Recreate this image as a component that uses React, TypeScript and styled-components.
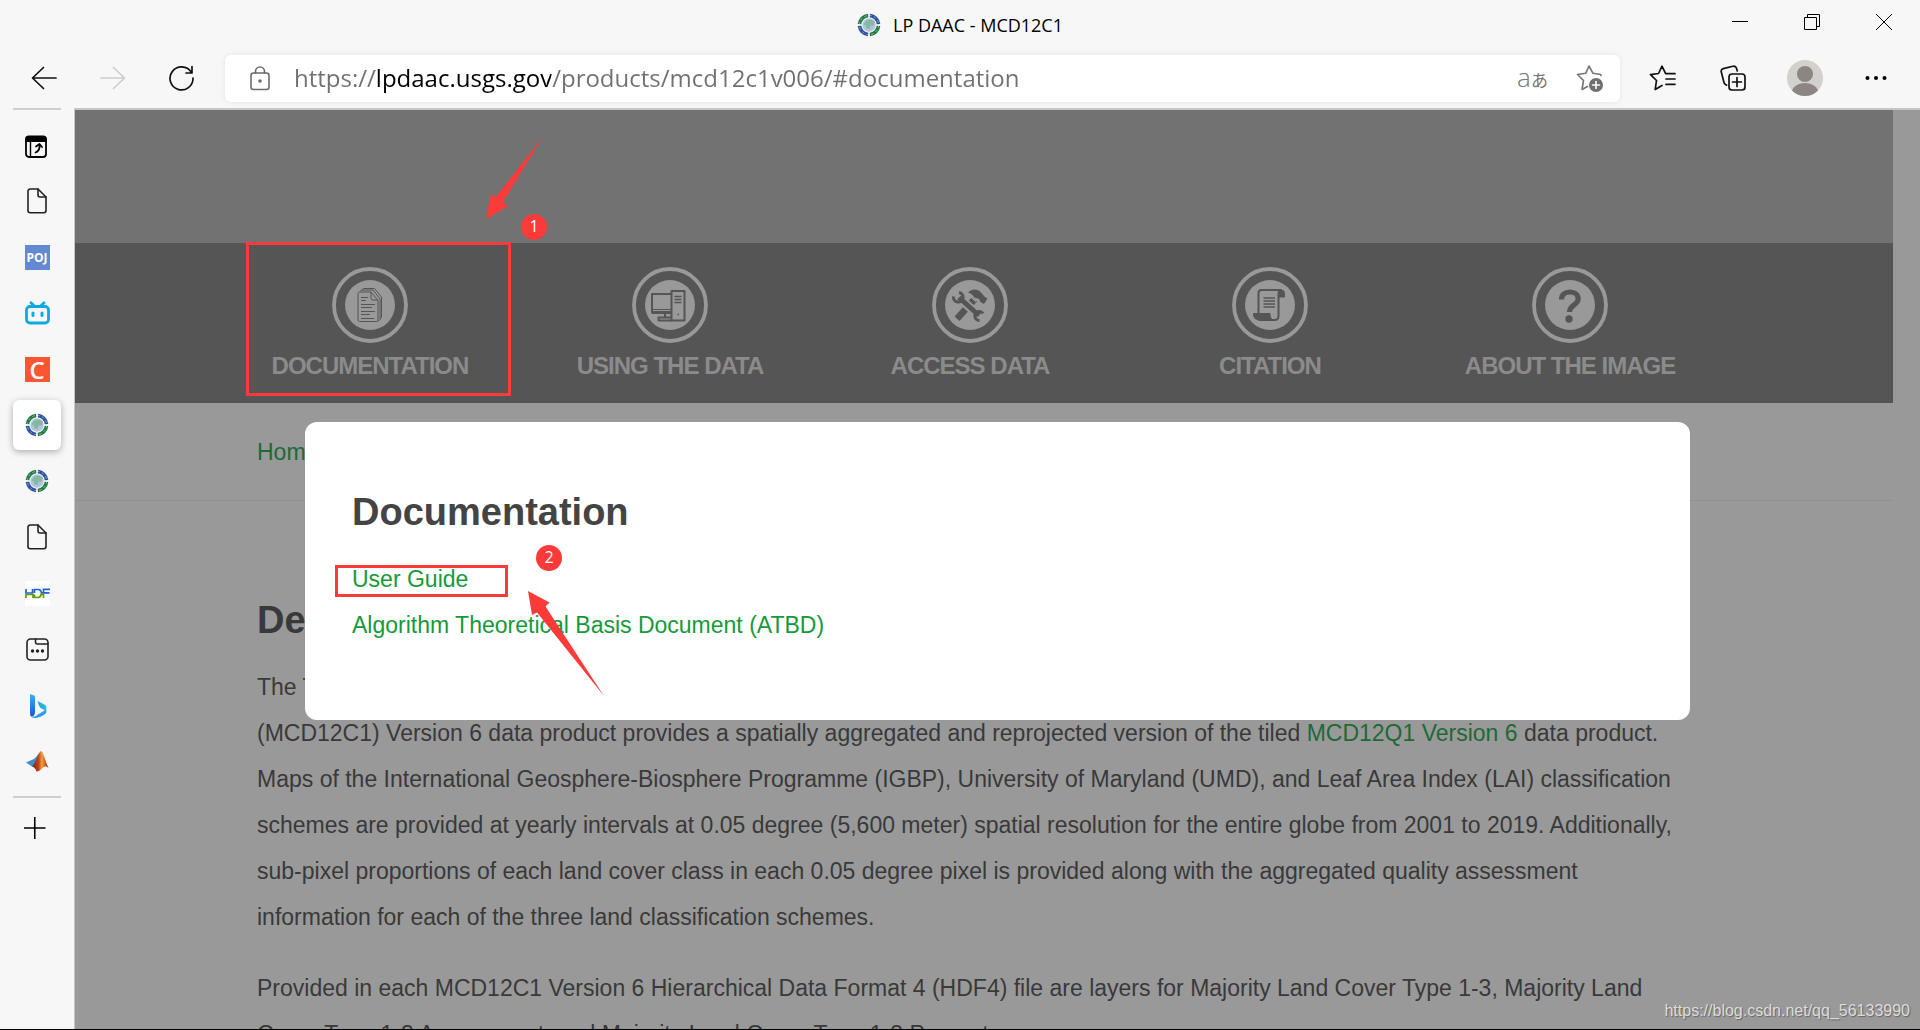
import React from "react";
import styled, { createGlobalStyle, css } from "styled-components";

const ui = `"Open Sans", "Noto Sans", sans-serif`;
const arial = `"Liberation Sans", Arial, sans-serif`;
const red = "#fd3a3a";

const GlobalStyle = createGlobalStyle`
  * { box-sizing: border-box; }
  html, body, #root { height: 100%; }
  body { margin: 0; overflow: hidden; background: #f7f7f7; }
  button { margin: 0; padding: 0; border: 0; background: none; font: inherit; color: inherit; cursor: pointer; }
  svg { display: block; flex: none; }
`;

/* ---------- browser frame ---------- */

const Window = styled.div`
  display: flex;
  flex-direction: column;
  height: 100vh;
  background: #f7f7f7;
  border-bottom: 1px solid #000;
  color: #111;
`;

const TitleBar = styled.header`
  display: grid;
  grid-template-columns: 1fr auto 1fr;
  height: 49px;
  flex: none;
`;

const TitleText = styled.div`
  grid-column: 2;
  display: flex;
  align-items: center;
  gap: 12px;
  font: 18px/24px ${ui};
  color: #000;
`;

const WindowButtons = styled.div`
  display: flex;
  justify-content: flex-end;
`;

const IconButton = styled.button<{ $w: number; $h?: number; $color?: string }>`
  display: flex;
  align-items: center;
  justify-content: center;
  flex: none;
  width: ${(p) => p.$w}px;
  height: ${(p) => p.$h ?? 47}px;
  color: ${(p) => p.$color ?? "#111"};
`;

const Toolbar = styled.nav`
  display: flex;
  align-items: center;
  height: 59px;
  flex: none;
  padding: 0 9px 1px;
`;

const AddressBar = styled.div`
  display: flex;
  align-items: center;
  flex: 1;
  min-width: 0;
  height: 47px;
  margin: 0 7px 0 9px;
  padding: 0 2px 0 25px;
  gap: 24px;
  border-radius: 6px;
  background: #fff;
  box-shadow: 0 0 6px rgba(0, 0, 0, 0.08);
`;

const AddressInput = styled.input`
  flex: 1;
  min-width: 0;
  height: 40px;
  padding: 0;
  border: 0;
  outline: 0;
  font: 24px/40px ${ui};
  color: transparent;
  background: linear-gradient(90deg, #707070 81px, #000 81px, #000 257px, #707070 257px);
  -webkit-background-clip: text;
  background-clip: text;
`;

const AddressActions = styled.div`
  display: flex;
`;

const TranslateLabel = styled.span`
  font: 300 26px/26px ${ui};
  small {
    font: 17px/26px "Noto Sans CJK JP", sans-serif;
  }
`;

const Body = styled.div`
  display: flex;
  flex: 1;
  min-height: 0;
`;

const TabRail = styled.aside`
  display: flex;
  flex-direction: column;
  align-items: center;
  flex: none;
  width: 74px;
`;

const RailLine = styled.hr`
  width: 48px;
  height: 2px;
  margin: 0;
  border: 0;
  flex: none;
  background: #cfcfcf;
`;

const TabList = styled.div`
  display: flex;
  flex-direction: column;
  gap: 6px;
  padding: 10px 0;
`;

const Tab = styled.button<{ $active?: boolean }>`
  display: flex;
  align-items: center;
  justify-content: center;
  width: 48px;
  height: 50px;
  border-radius: 6px;
  ${(p) =>
    p.$active &&
    css`
      background: #fff;
      box-shadow: 0 2px 7px rgba(0, 0, 0, 0.3);
    `}
`;

const Tile = styled.span<{ $bg: string; $size: number; $weight: number }>`
  display: flex;
  align-items: center;
  justify-content: center;
  width: 25px;
  height: 25px;
  overflow: hidden;
  background: ${(p) => p.$bg};
  color: #fff;
  font: ${(p) => p.$weight} ${(p) => p.$size}px/25px ${ui};
`;

/* ---------- web page ---------- */

const Viewport = styled.div`
  position: relative;
  display: flex;
  flex: 1;
  min-width: 0;
  border-top: 2px solid #c6c6c6;
  border-left: 1px solid #c6c6c6;
  background: #999;
  overflow: hidden;
  font: 23px/46px ${arial};
  color: #393939;
`;

const Page = styled.main`
  flex: 1;
  min-width: 0;
`;

const ScrollTrack = styled.div`
  flex: none;
  width: 27px;
  background: #999;
`;

const Banner = styled.div`
  height: 133px;
  background: #727272;
`;

const SectionNav = styled.nav`
  background: #555;
`;

const SectionList = styled.ul`
  display: grid;
  grid-template-columns: repeat(5, 1fr);
  max-width: 1528px;
  margin: 0 auto;
  padding: 24px 28px 14px 0;
  list-style: none;
`;

const SectionItem = styled.li`
  position: relative;
`;

const SectionLink = styled.a`
  display: flex;
  flex-direction: column;
  align-items: center;
  color: #8b8b8b;
  font-size: 24px;
  font-weight: 700;
  letter-spacing: -1px;
  text-decoration: none;
  text-transform: uppercase;
  white-space: nowrap;
`;

const Container = styled.div`
  max-width: 1454px;
  margin: 0 auto;
`;

const Breadcrumb = styled.div`
  padding: 26px 0 25px;
  border-bottom: 1px solid #919191;
`;

const Article = styled.article`
  padding: 96px 25px 0 0;
`;

const Heading = styled.h2`
  margin: 0 0 21px;
  font-size: 38px;
  line-height: 46px;
  font-weight: 700;
`;

const Paragraph = styled.p`
  margin: 0 0 25px;
`;

const PageLink = styled.a`
  color: #1d6a35;
  text-decoration: none;
`;

const Backdrop = styled.div`
  position: absolute;
  inset: 0;
  display: flex;
  justify-content: center;
  align-items: flex-start;
  padding-top: 312px;
`;

const Dialog = styled.section`
  width: 76%;
  max-width: 1385px;
  padding: 67px 47px 72px;
  border-radius: 12px;
  background: #fff;
  color: #444;
`;

const DocList = styled.ul`
  margin: 0;
  padding: 0;
  list-style: none;
`;

const DocItem = styled.li`
  position: relative;
`;

const DocLink = styled.a`
  color: #159a3a;
  text-decoration: none;
`;

/* ---------- annotations drawn over the page ---------- */

const Frame = styled.span<{ $x: number; $y: number; $w: number; $h: number }>`
  position: absolute;
  left: ${(p) => p.$x}px;
  top: ${(p) => p.$y}px;
  width: ${(p) => p.$w}px;
  height: ${(p) => p.$h}px;
  border: 3px solid ${red};
  pointer-events: none;
`;

const Badge = styled.span<{ $x: number; $y: number }>`
  position: absolute;
  left: ${(p) => p.$x}px;
  top: ${(p) => p.$y}px;
  width: 26px;
  height: 26px;
  border-radius: 50%;
  background: ${red};
  color: #fff;
  font: 16px/24px ${ui};
  text-align: center;
`;

const Arrow = styled.svg<{ $x: number; $y: number }>`
  position: absolute;
  left: ${(p) => p.$x}px;
  top: ${(p) => p.$y}px;
  fill: ${red};
  pointer-events: none;
`;

const Watermark = styled.span`
  position: absolute;
  right: 10px;
  bottom: 7px;
  font: 16px/22px ${arial};
  color: #dcdcdc;
  text-shadow: 1px 1px 1px rgba(0, 0, 0, 0.35);
`;

/* ---------- drawings ---------- */

const line = { fill: "none", stroke: "currentColor", strokeLinecap: "round", strokeLinejoin: "round" } as const;

const DaacLogo = () => (
  <svg width="24" height="24" viewBox="0 0 25 25" aria-hidden="true">
    <g fill="none" strokeWidth="3.800">
      <path d="M2.6 11.600A10 10 0 0 1 11.600 2.600" stroke="#1f7a45" />
      <path d="M13.400 2.600A10 10 0 0 1 22.400 11.600" stroke="#2c4f9e" />
      <path d="M22.400 13.400A10 10 0 0 1 13.400 22.400" stroke="#1f7a45" />
      <path d="M11.600 22.400A10 10 0 0 1 2.600 13.400" stroke="#2c4f9e" />
    </g>
    <circle cx="12.5" cy="12.5" r="10" fill="none" stroke="#fff" strokeWidth="1" strokeDasharray="3 2.2" opacity=".45" />
    <circle cx="12.5" cy="12.5" r="7" fill="#b4c2dd" />
    <path d="M8 10l3-3 5 0 3 3-2 3-3 0-1 4-3-1-1-3-2-1z" fill="#84b8a2" />
  </svg>
);

const PageIcon = () => (
  <svg width="20" height="26" viewBox="0 0 20 26" aria-hidden="true" {...line} stroke="#222" strokeWidth="1.6">
    <path d="M3.2 1H11l8 8v13.6a2.2 2.2 0 0 1-2.2 2.2H3.2A2.2 2.2 0 0 1 1 22.600V3.200A2.200 2.200 0 0 1 3.200 1z" />
    <path d="M11 1v6a2 2 0 0 0 2 2h6" />
  </svg>
);

const TabActionsIcon = () => (
  <svg width="25" height="28" viewBox="0 0 25 28" aria-hidden="true" {...line} stroke="#000" strokeWidth="1.800">
    <rect x="1" y="6" width="20" height="20" rx="3" />
    <path d="M1 10V8.500A3 3 0 0 1 4 5.500h14a3 3 0 0 1 3 3V10z" fill="#000" />
    <path d="M5.500 11v15" strokeWidth="1.400" />
    <path d="M10.500 21.500c3-1 4.500-3 4-8M11 15.500l3.500-2.500 2.500 3" strokeWidth="1.800" />
  </svg>
);

const BiliIcon = () => (
  <svg width="25" height="24" viewBox="0 0 25 24" aria-hidden="true" {...line} stroke="#10a9e0" strokeWidth="2.800">
    <path d="M6 1.800l3 3M19 1.800l-3 3" />
    <rect x="1.500" y="5.500" width="22" height="16.500" rx="3.500" />
    <path d="M8 12v2.500M17 12v2.500" strokeWidth="3" />
  </svg>
);

const HdfIcon = () => (
  <svg width="25" height="25" viewBox="0 0 25 25" aria-hidden="true">
    <rect width="25" height="25" fill="#fff" />
    <g fill="none" strokeWidth="1.700">
      <path d="M1 8v4h6.500V8M9.500 12V8.500h4q2.500 0 3 3.500M18.500 12V8.300H25M16 11.800H24.500" stroke="#1f62dd" />
      <path d="M1 17v-3.500h7V17M9.500 13.500V16.500H13q3 0 3-3.200H18.500V17" stroke="#5d9c10" />
    </g>
  </svg>
);

const AppTabIcon = () => (
  <svg width="23" height="23" viewBox="0 0 23 23" aria-hidden="true" {...line} stroke="#222" strokeWidth="1.600">
    <rect x="1" y="1" width="21" height="21" rx="3.500" />
    <path d="M9.500 1v3a2 2 0 0 0 2 2H22" />
    <path d="M6.500 13h.01M11.500 13h.01M16.500 13h.01" strokeWidth="3.400" />
  </svg>
);

const BingIcon = () => (
  <svg width="25" height="25" viewBox="0 0 25 25" aria-hidden="true">
    <defs>
      <linearGradient id="bingStem" x1="0" y1="0" x2="0" y2="1">
        <stop offset="0" stopColor="#3bb0f5" />
        <stop offset="1" stopColor="#1c55dc" />
      </linearGradient>
      <linearGradient id="bingBowl" x1="0" y1="1" x2="1" y2="0">
        <stop offset="0" stopColor="#2b7ff0" />
        <stop offset="1" stopColor="#34dccb" />
      </linearGradient>
    </defs>
    <path d="M5 22.500c3 2.500 6 .5 8-1l8-5c1.500 4-1 5-4 6.500-4 2-9 3.500-12-.5z" fill="#2d9cf3" />
    <path d="M12.500 8l7 3.500c2.500 1.500 2.500 4 1 6l-5-2.500-1.800-3z" fill="url(#bingBowl)" />
    <path d="M5 1l3.500 1.300c1 .4 1.500 1 1.500 2.200V19c0 2.500-1.500 4.500-3 4.500S5 22 5 20z" fill="url(#bingStem)" />
  </svg>
);

const MatlabIcon = () => (
  <svg width="25" height="25" viewBox="0 0 25 25" aria-hidden="true">
    <defs>
      <linearGradient id="matlabPeak" x1="0" y1="0" x2="1" y2="0">
        <stop offset="0" stopColor="#6a2a1e" />
        <stop offset=".4" stopColor="#c8401c" />
        <stop offset=".6" stopColor="#f6a13a" />
        <stop offset="1" stopColor="#9c2314" />
      </linearGradient>
    </defs>
    <path d="M1 13.500l6-2.700c3-.6 5-4 8-8L10 16l-3 1.500z" fill="#3f8fc4" />
    <path d="M7 17.500C11 14 12.500 5 16 2c2 0 4.500 11 7.500 17-3-2.500-4.500-1.500-6.500.5-2 2-3.500 3-5.500 3-.8-2.500-2-4-4.500-5z" fill="url(#matlabPeak)" />
  </svg>
);

const BackIcon = () => (
  <svg width="26" height="24" viewBox="0 0 26 24" aria-hidden="true" {...line} strokeWidth="1.700">
    <path d="M12.500 1.500L1.500 12l11 10.500M2 12h23" />
  </svg>
);

const ForwardIcon = () => (
  <svg width="26" height="24" viewBox="0 0 26 24" aria-hidden="true" {...line} strokeWidth="1.700">
    <path d="M13.500 1.500l11 10.500-11 10.500M24 12H1" />
  </svg>
);

const ReloadIcon = () => (
  <svg width="26" height="26" viewBox="0 0 26 26" aria-hidden="true" {...line} strokeWidth="1.700">
    <path d="M22.200 7.200A11.500 11.500 0 1 0 24 13M23 1.500v6.500h-6" />
  </svg>
);

const LockIcon = () => (
  <svg width="20" height="25" viewBox="0 0 20 25" aria-hidden="true" {...line} stroke="#6b6b6b" strokeWidth="1.600">
    <rect x="1" y="7" width="18" height="16.500" rx="2.500" />
    <path d="M5.500 7V5.500a4.500 4.500 0 0 1 9 0V7" />
    <circle cx="10" cy="15" r="1" fill="#6b6b6b" />
  </svg>
);

const StarAddIcon = () => (
  <svg width="27" height="27" viewBox="0 0 27 27" aria-hidden="true" {...line} strokeWidth="1.600">
    <path d="M25 10.500l-.3-1-7.700-1.200L13 1 9.700 8.300 1.500 9.500l6 6L6 24.500l5.500-3" />
    <circle cx="20" cy="20" r="7" fill="#6f6f6f" stroke="none" />
    <path d="M20 16.500v7M16.500 20h7" stroke="#fff" />
  </svg>
);

const FavoritesIcon = () => (
  <svg width="27" height="26" viewBox="0 0 27 26" aria-hidden="true" {...line} strokeWidth="1.700">
    <path d="M19 8.700l-2.500-.4L13 1.200 9.500 8.500l-8 1.200 6 5.800L6.200 24.500l6.800-4M17 8.700h9M17 14h9M17 19.300h9" />
  </svg>
);

const CollectionsIcon = () => (
  <svg width="27" height="27" viewBox="0 0 27 27" aria-hidden="true" {...line} strokeWidth="1.700">
    <rect x="9" y="9" width="16" height="16" rx="3" />
    <path d="M17 12.500v9M12.500 17h9M6.500 20l-1-.5a3 3 0 0 1-1.500-2L1.300 7a2.800 2.800 0 0 1 2-3.400l9.500-2.400a3 3 0 0 1 3.700 2l.8 2.800" />
  </svg>
);

const Avatar = () => (
  <svg width="36" height="36" viewBox="0 0 36 36" aria-hidden="true">
    <defs>
      <clipPath id="avatarClip">
        <circle cx="18" cy="18" r="18" />
      </clipPath>
    </defs>
    <g clipPath="url(#avatarClip)">
      <rect width="36" height="36" fill="#d3d1cc" />
      <circle cx="18" cy="14" r="8" fill="#8b8683" />
      <ellipse cx="18" cy="33.500" rx="13.500" ry="10.500" fill="#8b8683" />
    </g>
  </svg>
);

const DotsIcon = () => (
  <svg width="22" height="6" viewBox="0 0 22 6" aria-hidden="true" fill="#000">
    <circle cx="2.500" cy="3" r="2" />
    <circle cx="11" cy="3" r="2" />
    <circle cx="19.500" cy="3" r="2" />
  </svg>
);

const Ring = ({ children }: { children: React.ReactNode }) => (
  <svg width="76" height="76" viewBox="0 0 76 76" aria-hidden="true">
    <circle cx="38" cy="38" r="36" fill="none" stroke="#999" strokeWidth="3.800" />
    <circle cx="38" cy="38" r="25" fill="#999" />
    {children}
  </svg>
);

const dark = { fill: "none", stroke: "#555", strokeLinejoin: "round" } as const;

const DocsGlyph = () => (
  <g {...dark} strokeWidth="1">
    <path d="M30 23.500l1.500-2h11l7 8.500v20.500l-1.500 1.500M28 24.500l1.500-1.500h11.500l7 9v20.500l-2 2" />
    <path d="M26 26.500q0-1.500 1.500-1.500H39l7 8.500v19.500q0 1.500-1.500 1.500h-17q-1.500 0-1.500-1.500z" fill="#999" />
    <path d="M39 25v6.500q0 1.500 2 1.500h5" />
    <path d="M29 30.500h7M29 33.500h5M29 37.500h14M29 40.500h11M29 44.500h14M29 47.500h9M29 51.500h13" />
  </g>
);

const ComputerGlyph = () => (
  <g {...dark} strokeWidth="2">
    <path d="M39 27H20v18.500h19M33 46v5M39 50.500H26.500v3H40" />
    <path d="M20 42.500h19" strokeWidth="1" />
    <path d="M20 45.500h19" strokeWidth="3" />
    <rect x="39.500" y="24" width="13" height="29.500" />
    <path d="M42.500 29.500h7M42.500 32.500h7M42.500 35.500h7M45.500 47.500h1.500" strokeWidth="1.300" />
  </g>
);

const ToolsGlyph = () => (
  <g>
    <path d="M22.500 49.500l17.500-19.500 5 4.500-17.500 19.500z" fill="#555" />
    <path d="M36 25.500c4-4.500 10-3.500 13 0l4 4.500 2.500 1.500-3.500 5.500-3.500-2-1.500-3-4.500-1.500c-2-2.500-3.500-4.500-6.500-5z" fill="#555" />
    <path d="M38 29l6 5.500" stroke="#999" strokeWidth="1.500" />
    <path d="M28 31.500l18 16.500" stroke="#999" strokeWidth="9" />
    <path d="M27 30.500l20 18" stroke="#555" strokeWidth="5" />
    <path d="M21.500 29.500a4.800 4.800 0 1 0 5.500-4M51 46.500a4.500 4.500 0 1 0-3.500 7" fill="none" stroke="#555" strokeWidth="3" />
  </g>
);

const ScrollGlyph = () => (
  <g {...dark} strokeWidth="2">
    <path d="M26.500 47V26q0-3 3-3h19.500q-2.500 1-2.500 4v22q0 4-4 4H27" />
    <path d="M46.500 30v-3q0-4 3-4t3 4v3z" fill="#555" strokeWidth="1" />
    <path d="M21.500 46.500H38c0 3 1 6.500 4 6.500H27c-4 0-5.500-3-5.500-6.500z" fill="#555" strokeWidth="1" />
    <path d="M31.500 31H43M31.500 34H43M31.500 37H43M31.500 40H43" strokeWidth="1.300" />
  </g>
);

const QuestionGlyph = () => (
  <g>
    <path d="M29.500 32.500c0-4.500 3.500-7.500 8.500-7.500s8.200 3 8.200 7c0 6-8.700 6-8.700 13" fill="none" stroke="#555" strokeWidth="5.200" />
    <circle cx="37" cy="52" r="3.700" fill="#555" />
  </g>
);

/* ---------- screen ---------- */

const tabs: { name: string; icon: React.ReactNode; active?: boolean }[] = [
  { name: "Tab actions", icon: <TabActionsIcon /> },
  { name: "New page", icon: <PageIcon /> },
  { name: "POJ", icon: <Tile $bg="#6289d2" $size={12} $weight={700}>POJ</Tile> },
  { name: "Bilibili", icon: <BiliIcon /> },
  { name: "CSDN", icon: <Tile $bg="#fc5531" $size={24} $weight={600}>C</Tile> },
  { name: "LP DAAC - MCD12C1", icon: <DaacLogo />, active: true },
  { name: "LP DAAC", icon: <DaacLogo /> },
  { name: "Blank page", icon: <PageIcon /> },
  { name: "HDF", icon: <HdfIcon /> },
  { name: "Web app", icon: <AppTabIcon /> },
  { name: "Bing", icon: <BingIcon /> },
  { name: "MATLAB", icon: <MatlabIcon /> },
];

const sections = [
  { label: "Documentation", glyph: <DocsGlyph />, marked: true },
  { label: "Using the Data", glyph: <ComputerGlyph /> },
  { label: "Access Data", glyph: <ToolsGlyph /> },
  { label: "Citation", glyph: <ScrollGlyph /> },
  { label: "About the Image", glyph: <QuestionGlyph /> },
];

export default function App() {
  return (
    <Window>
      <GlobalStyle />
      <TitleBar>
        <TitleText>
          <DaacLogo />
          LP DAAC - MCD12C1
        </TitleText>
        <WindowButtons>
          <IconButton $w={72} $h={43} aria-label="Minimize">
            <svg width="16" height="16" viewBox="0 0 16 16" stroke="#000"><path d="M0 7.500h16" /></svg>
          </IconButton>
          <IconButton $w={72} $h={43} aria-label="Restore">
            <svg width="16" height="16" viewBox="0 0 16 16" stroke="#000" fill="none">
              <path d="M.5 3.500h12v12H.5zM3.500 3.500v-3h12v12h-3" />
            </svg>
          </IconButton>
          <IconButton $w={72} $h={43} aria-label="Close">
            <svg width="16" height="16" viewBox="0 0 16 16" stroke="#000"><path d="M0 0l16 16M16 0L0 16" /></svg>
          </IconButton>
        </WindowButtons>
      </TitleBar>

      <Toolbar>
        <IconButton $w={69} aria-label="Back"><BackIcon /></IconButton>
        <IconButton $w={69} $color="#cdcdcd" aria-label="Forward"><ForwardIcon /></IconButton>
        <IconButton $w={69} aria-label="Reload"><ReloadIcon /></IconButton>
        <AddressBar>
          <LockIcon />
          <AddressInput aria-label="Address" defaultValue="https://lpdaac.usgs.gov/products/mcd12c1v006/#documentation" />
          <AddressActions>
            <IconButton $w={57} $color="#757575" aria-label="Translate">
              <TranslateLabel>a<small>あ</small></TranslateLabel>
            </IconButton>
            <IconButton $w={57} $color="#757575" aria-label="Add to favorites"><StarAddIcon /></IconButton>
          </AddressActions>
        </AddressBar>
        <IconButton $w={71} aria-label="Favorites"><FavoritesIcon /></IconButton>
        <IconButton $w={71} aria-label="Collections"><CollectionsIcon /></IconButton>
        <IconButton $w={71} aria-label="Profile"><Avatar /></IconButton>
        <IconButton $w={71} aria-label="Settings and more"><DotsIcon /></IconButton>
      </Toolbar>

      <Body>
        <TabRail>
          <RailLine />
          <TabList>
            {tabs.map((t) => (
              <Tab key={t.name} $active={t.active} aria-label={t.name}>{t.icon}</Tab>
            ))}
          </TabList>
          <RailLine />
          <IconButton $w={54} $h={60} aria-label="New tab">
            <svg width="26" height="22" viewBox="0 0 26 22" stroke="#000" strokeWidth="1.600">
              <path d="M0 11h21.500M10.750 0v22" />
            </svg>
          </IconButton>
        </TabRail>

        <Viewport>
          <Page>
            <Banner />
            <SectionNav>
              <SectionList>
                {sections.map((s) => (
                  <SectionItem key={s.label}>
                    <SectionLink href="#documentation">
                      <Ring>{s.glyph}</Ring>
                      {s.label}
                    </SectionLink>
                    {s.marked && (
                      <>
                        <Frame $x={26} $y={-25} $w={265} $h={154} />
                        <Badge $x={301} $y={-53}>1</Badge>
                        <Arrow $x={266} $y={-131} width="58" height="84" viewBox="0 0 58 84">
                          <path d="M0 83.500L5 58l4.500 3.500L57 .5 17 66l5 4z" />
                        </Arrow>
                      </>
                    )}
                  </SectionItem>
                ))}
              </SectionList>
            </SectionNav>
            <Breadcrumb>
              <Container>
                <PageLink href="#home">Home</PageLink>
              </Container>
            </Breadcrumb>
            <Container>
              <Article>
                <Heading>Description</Heading>
                <Paragraph>
                  The Terra and Aqua combined Moderate Resolution Imaging Spectroradiometer (MODIS) Land Cover Climate Modeling Grid (CMG)
                  {" "}(MCD12C1) Version 6 data product provides a spatially aggregated and reprojected version of the tiled{" "}
                  <PageLink href="#mcd12q1">MCD12Q1 Version 6</PageLink> data product. Maps of the International
                  Geosphere-Biosphere Programme (IGBP), University of Maryland (UMD), and Leaf Area Index (LAI)
                  classification schemes are provided at yearly intervals at 0.05 degree (5,600 meter) spatial
                  resolution for the entire globe from 2001 to 2019. Additionally, sub-pixel proportions of each land
                  cover class in each 0.05 degree pixel is provided along with the aggregated quality assessment
                  information for each of the three land classification schemes.
                </Paragraph>
                <Paragraph>
                  Provided in each MCD12C1 Version 6 Hierarchical Data Format 4 (HDF4) file are layers for Majority
                  Land Cover Type 1-3, Majority Land Cover Type 1-3 Assessment, and Majority Land Cover Type 1-3
                  Percent.
                </Paragraph>
              </Article>
            </Container>
          </Page>
          <ScrollTrack />

          <Backdrop>
            <Dialog role="dialog" aria-labelledby="dialog-title">
              <Heading id="dialog-title">Documentation</Heading>
              <DocList>
                <DocItem>
                  <DocLink href="#user-guide">User Guide</DocLink>
                  <Frame $x={-17} $y={9} $w={173} $h={32} />
                  <Badge $x={184} $y={-11}>2</Badge>
                </DocItem>
                <DocItem>
                  <DocLink href="#atbd">Algorithm Theoretical Basis Document (ATBD)</DocLink>
                  <Arrow $x={176} $y={-11} width="77" height="106" viewBox="0 0 77 106">
                    <path d="M0 0l21.500 11.500-4 4L76 105 9 21.500 4 24z" />
                  </Arrow>
                </DocItem>
              </DocList>
            </Dialog>
          </Backdrop>
          <Watermark>https://blog.csdn.net/qq_56133990</Watermark>
        </Viewport>
      </Body>
    </Window>
  );
}
